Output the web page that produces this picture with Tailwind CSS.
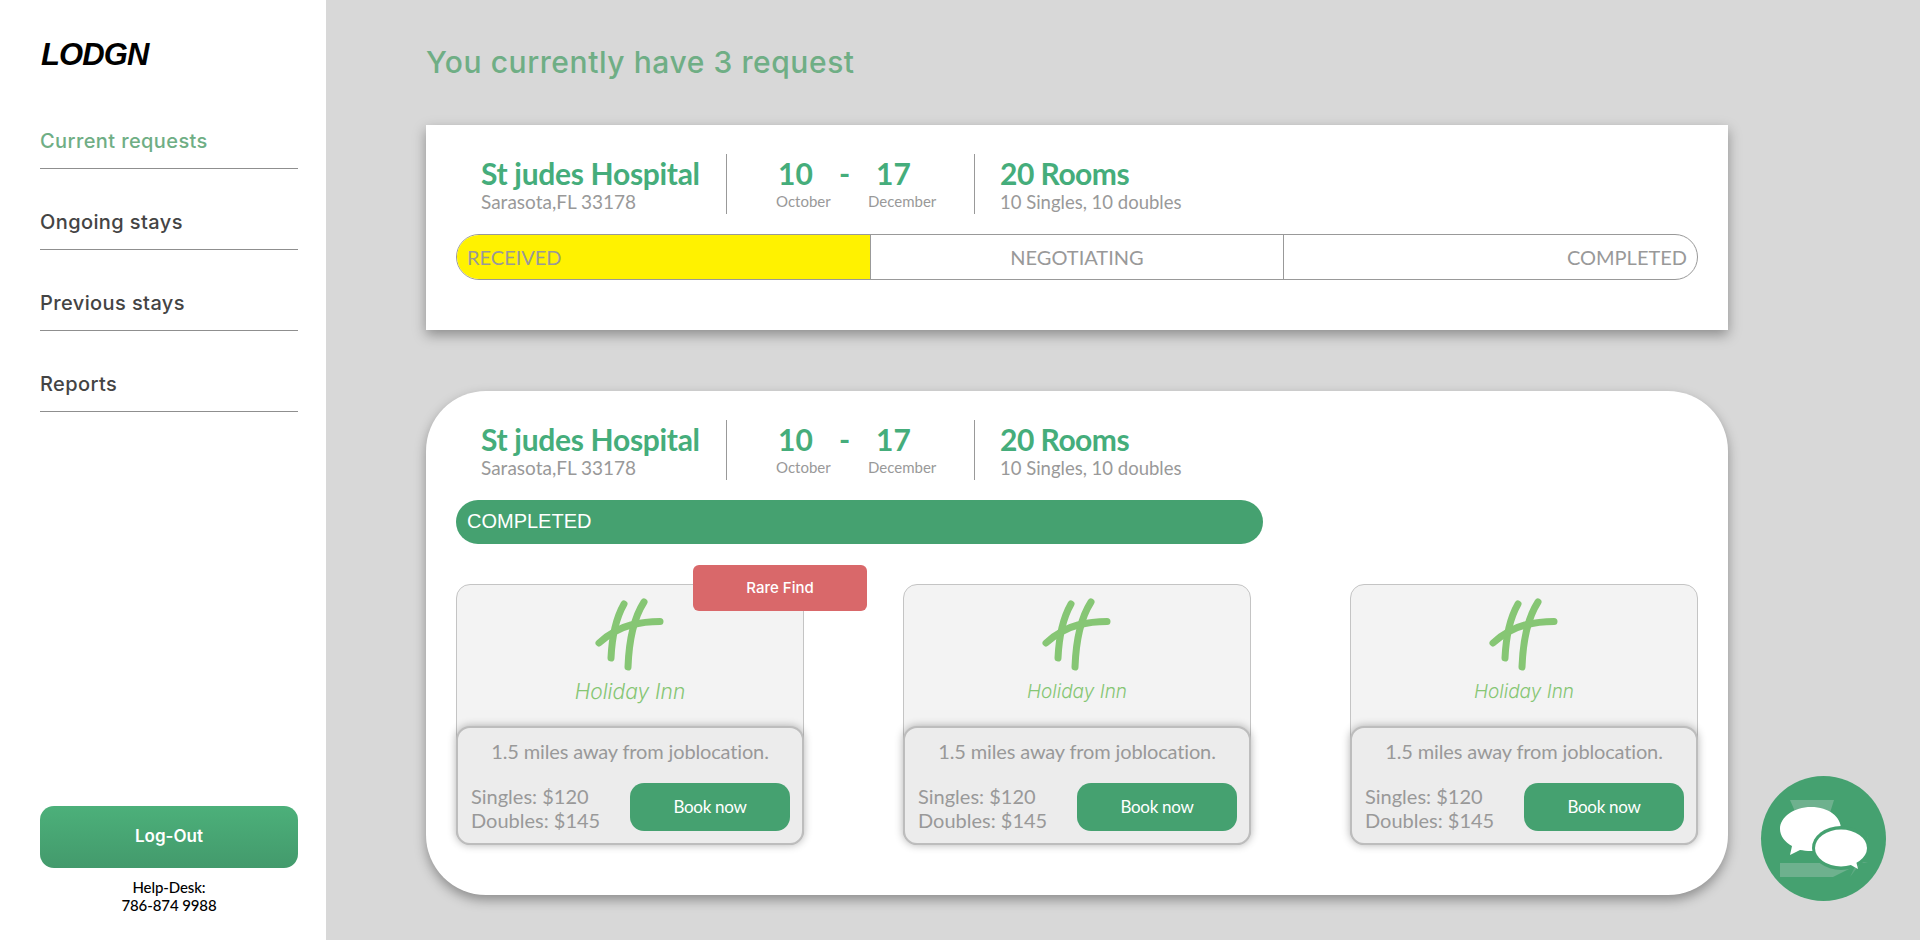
<!DOCTYPE html>
<html lang="en">
<head>
  <meta charset="UTF-8" />
  <title>LODGN</title>
  <script src="https://cdn.jsdelivr.net/npm/@tailwindcss/browser@4"></script>
</head>
<body class="h-[940px] overflow-hidden bg-[#d8d8d8] font-['Lato',sans-serif]">
  <div class="flex h-full relative">
    <!-- sidebar -->
    <aside class="w-[326px] h-full bg-white pl-[40px] pr-[28px] flex flex-col shrink-0">
      <div class="mt-[37px] pl-[1px] h-[36px] leading-[36px] text-[31px] tracking-[-0.9px] font-bold italic text-black font-['Liberation_Sans',sans-serif]">LODGN</div>
      <nav class="mt-[15px] flex flex-col font-['Inter',sans-serif] font-medium text-[20px] text-[#444] tracking-[0.4px]">
        <a class="h-[81px] flex items-end pb-[12px] border-b border-[#8f8f8f] text-[#6fae85]">Current requests</a>
        <a class="h-[81px] flex items-end pb-[12px] border-b border-[#8f8f8f]">Ongoing stays</a>
        <a class="h-[81px] flex items-end pb-[12px] border-b border-[#8f8f8f]">Previous stays</a>
        <a class="h-[81px] flex items-end pb-[12px] border-b border-[#8f8f8f]">Reports</a>
      </nav>
      <button class="mt-auto h-[62px] w-full rounded-[14px] bg-gradient-to-b from-[#4cb07a] to-[#439a6c] text-white text-[17px] font-semibold font-['Inter',sans-serif]">Log-Out</button>
      <p class="mt-[10px] mb-[26px] text-center text-[15px] tracking-[-0.1px] leading-[18px] font-medium text-black">Help-Desk:<br />786-874 9988</p>
    </aside>

    <!-- main -->
    <main class="flex-1 pl-[100px] pt-[41px]">
      <h1 class="h-[43px] leading-[43px] text-[30px] font-medium text-[#6fae85] font-['Inter',sans-serif] tracking-[0.57px]">You currently have 3 request</h1>

      <!-- first request -->
      <section class="mt-[41px] w-[1302px] h-[205px] bg-white px-[30px] pt-[29px] shadow-[0_5px_12px_rgba(0,0,0,0.35)]">
        <div class="flex h-[60px] text-[#999]">
          <div class="w-[270px] pl-[25px]">
            <div class="text-[30px] leading-[38px] font-bold text-[#45ad7b] tracking-[-0.3px]">St judes Hospital</div>
            <div class="text-[19px] leading-[20px]">Sarasota,FL 33178</div>
          </div>
          <div class="w-px bg-[#999]"></div>
          <div class="w-[247px] pl-[49px]">
            <div class="flex text-[30px] leading-[38px] font-bold text-[#45ad7b]">
              <span class="w-[63px] pl-[2px]">10</span><span class="w-[37px]">-</span><span>17</span>
            </div>
            <div class="flex text-[15px] leading-[18px]">
              <span class="w-[92px]">October</span><span>December</span>
            </div>
          </div>
          <div class="w-px bg-[#999]"></div>
          <div class="pl-[25px]">
            <div class="text-[30px] leading-[38px] font-bold text-[#45ad7b] tracking-[-0.5px]">20 Rooms</div>
            <div class="text-[18.500px] leading-[20px]">10 Singles, 10 doubles</div>
          </div>
        </div>
        <div class="mt-[20px] h-[46px] flex rounded-[23px] border border-[#999] overflow-hidden text-[20px] leading-[44px] text-[#999]">
          <div class="w-[414px] bg-[#fff200] pl-[10px] border-r border-[#999]">RECEIVED</div>
          <div class="w-[413px] text-center border-r border-[#999]">NEGOTIATING</div>
          <div class="flex-1 text-right pr-[10px]">COMPLETED</div>
        </div>
      </section>

      <!-- second request -->
      <section class="mt-[61px] w-[1302px] h-[504px] bg-white rounded-[60px] px-[30px] pt-[29px] shadow-[0_5px_12px_rgba(0,0,0,0.35)]">
        <div class="flex h-[60px] text-[#999]">
          <div class="w-[270px] pl-[25px]">
            <div class="text-[30px] leading-[38px] font-bold text-[#45ad7b] tracking-[-0.3px]">St judes Hospital</div>
            <div class="text-[19px] leading-[20px]">Sarasota,FL 33178</div>
          </div>
          <div class="w-px bg-[#999]"></div>
          <div class="w-[247px] pl-[49px]">
            <div class="flex text-[30px] leading-[38px] font-bold text-[#45ad7b]">
              <span class="w-[63px] pl-[2px]">10</span><span class="w-[37px]">-</span><span>17</span>
            </div>
            <div class="flex text-[15px] leading-[18px]">
              <span class="w-[92px]">October</span><span>December</span>
            </div>
          </div>
          <div class="w-px bg-[#999]"></div>
          <div class="pl-[25px]">
            <div class="text-[30px] leading-[38px] font-bold text-[#45ad7b] tracking-[-0.5px]">20 Rooms</div>
            <div class="text-[18.500px] leading-[20px]">10 Singles, 10 doubles</div>
          </div>
        </div>
        <div class="mt-[20px] h-[44px] w-[807px] rounded-[22px] bg-[#45a170] pl-[11px] text-[20px] leading-[42px] text-white font-['Liberation_Sans',sans-serif]">COMPLETED</div>

        <div class="mt-[40px] flex justify-between">
          <!-- hotel 1 -->
          <article class="relative w-[348px] h-[261px] rounded-[14px] border border-[#c4c4c4] bg-[#f3f3f3] flex flex-col">
            <div class="absolute left-[236px] top-[-20px] w-[174px] h-[46px] rounded-[6px] bg-[#d9686a] text-white text-[15px] font-medium leading-[46px] text-center font-['Inter',sans-serif]">Rare Find</div>
            <div class="h-[141px] flex flex-col items-center pt-[13px]">
              <svg width="70" height="74" viewBox="0 0 70 74" fill="none" stroke="#86c674" stroke-width="7" stroke-linecap="round"><path d="M29 6C21 20 17 38 16 60" /><path d="M49 4C40 18 34 42 33 69" /><path d="M4 45C14 36 24 30 36 27C46 24.500 56 23.500 65 23.500" /></svg>
              <div class="mt-[8px] text-[21px] leading-[24px] italic text-[#86c674] font-['Inter',sans-serif] font-light">Holiday Inn</div>
            </div>
            <div class="flex-1 -mx-px -mb-px rounded-[14px] border-2 border-[#bdbdbd] bg-[#ececec] shadow-[0_0_8px_rgba(0,0,0,0.3)] text-[#999] text-[20px]">
              <div class="mt-[11px] leading-[24px] text-center tracking-[-0.15px]">1.5 miles away from joblocation.</div>
              <div class="mt-[20px] flex justify-between pl-[13px] pr-[12px]">
                <div class="leading-[24px] pt-[1px]">Singles: $120<br />Doubles: $145</div>
                <button class="w-[160px] h-[48px] rounded-[14px] bg-[#45a170] text-white text-[17px] tracking-[-0.3px]">Book now</button>
              </div>
            </div>
          </article>
          <!-- hotel 2 -->
          <article class="w-[348px] h-[261px] rounded-[14px] border border-[#c4c4c4] bg-[#f3f3f3] flex flex-col">
            <div class="h-[141px] flex flex-col items-center pt-[13px]">
              <svg width="70" height="74" viewBox="0 0 70 74" fill="none" stroke="#86c674" stroke-width="7" stroke-linecap="round"><path d="M29 6C21 20 17 38 16 60" /><path d="M49 4C40 18 34 42 33 69" /><path d="M4 45C14 36 24 30 36 27C46 24.500 56 23.500 65 23.500" /></svg>
              <div class="mt-[8px] text-[19px] leading-[24px] italic text-[#86c674] font-['Inter',sans-serif] font-light">Holiday Inn</div>
            </div>
            <div class="flex-1 -mx-px -mb-px rounded-[14px] border-2 border-[#bdbdbd] bg-[#ececec] shadow-[0_0_8px_rgba(0,0,0,0.3)] text-[#999] text-[20px]">
              <div class="mt-[11px] leading-[24px] text-center tracking-[-0.15px]">1.5 miles away from joblocation.</div>
              <div class="mt-[20px] flex justify-between pl-[13px] pr-[12px]">
                <div class="leading-[24px] pt-[1px]">Singles: $120<br />Doubles: $145</div>
                <button class="w-[160px] h-[48px] rounded-[14px] bg-[#45a170] text-white text-[17px] tracking-[-0.3px]">Book now</button>
              </div>
            </div>
          </article>
          <!-- hotel 3 -->
          <article class="w-[348px] h-[261px] rounded-[14px] border border-[#c4c4c4] bg-[#f3f3f3] flex flex-col">
            <div class="h-[141px] flex flex-col items-center pt-[13px]">
              <svg width="70" height="74" viewBox="0 0 70 74" fill="none" stroke="#86c674" stroke-width="7" stroke-linecap="round"><path d="M29 6C21 20 17 38 16 60" /><path d="M49 4C40 18 34 42 33 69" /><path d="M4 45C14 36 24 30 36 27C46 24.500 56 23.500 65 23.500" /></svg>
              <div class="mt-[8px] text-[19px] leading-[24px] italic text-[#86c674] font-['Inter',sans-serif] font-light">Holiday Inn</div>
            </div>
            <div class="flex-1 -mx-px -mb-px rounded-[14px] border-2 border-[#bdbdbd] bg-[#ececec] shadow-[0_0_8px_rgba(0,0,0,0.3)] text-[#999] text-[20px]">
              <div class="mt-[11px] leading-[24px] text-center tracking-[-0.15px]">1.5 miles away from joblocation.</div>
              <div class="mt-[20px] flex justify-between pl-[13px] pr-[12px]">
                <div class="leading-[24px] pt-[1px]">Singles: $120<br />Doubles: $145</div>
                <button class="w-[160px] h-[48px] rounded-[14px] bg-[#45a170] text-white text-[17px] tracking-[-0.3px]">Book now</button>
              </div>
            </div>
          </article>
        </div>
      </section>
    </main>

    <!-- chat button -->
    <div class="absolute left-[1761px] top-[776px] w-[125px] h-[125px] rounded-full bg-[#45a170]">
      <svg width="125" height="125" viewBox="0 0 125 125">
        <path d="M29 24H73L68 40H36Z" fill="#6eb18e" />
        <path d="M19 87H100L72 101H19Z" fill="#6eb18e" />
        <path d="M107 59L100 78L89 101L100 87L107 87L100 85Z" fill="#6eb18e" opacity="0.6" />
        <path d="M19 53C19 41 33 31 50 31C68 31 80 41 80 53C80 65 68 75 50 75C46 75 42 74.500 39 74L29 79L31 70C24 66 19 60 19 53Z" fill="#fff" />
        <ellipse cx="80" cy="72" rx="29" ry="22" fill="#45a170" />
        <ellipse cx="80" cy="72" rx="26" ry="18.500" fill="#fff" />
        <path d="M88 88L97 93L95 85Z" fill="#fff" />
      </svg>
    </div>
  </div>
</body>
</html>
